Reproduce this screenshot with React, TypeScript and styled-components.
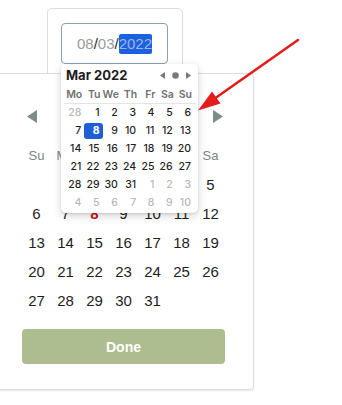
import styled, { createGlobalStyle } from 'styled-components';

const GlobalStyle = createGlobalStyle`
  html, body {
    margin: 0;
    padding: 0;
    background: #ffffff;
  }
  body {
    font-family: "Liberation Sans", Arial, sans-serif;
  }
  * {
    box-sizing: border-box;
  }
`;

type DayCell = {
  day: number;
  muted?: boolean;
  selected?: boolean;
};

const popupRows: DayCell[][] = [
  [{ day: 28, muted: true }, { day: 1 }, { day: 2 }, { day: 3 }, { day: 4 }, { day: 5 }, { day: 6 }],
  [{ day: 7 }, { day: 8, selected: true }, { day: 9 }, { day: 10 }, { day: 11 }, { day: 12 }, { day: 13 }],
  [{ day: 14 }, { day: 15 }, { day: 16 }, { day: 17 }, { day: 18 }, { day: 19 }, { day: 20 }],
  [{ day: 21 }, { day: 22 }, { day: 23 }, { day: 24 }, { day: 25 }, { day: 26 }, { day: 27 }],
  [
    { day: 28 },
    { day: 29 },
    { day: 30 },
    { day: 31 },
    { day: 1, muted: true },
    { day: 2, muted: true },
    { day: 3, muted: true },
  ],
  [4, 5, 6, 7, 8, 9, 10].map((d) => ({ day: d, muted: true })),
];

const monthRows: (number | null)[][] = [
  [null, null, 1, 2, 3, 4, 5],
  [6, 7, 8, 9, 10, 11, 12],
  [13, 14, 15, 16, 17, 18, 19],
  [20, 21, 22, 23, 24, 25, 26],
  [27, 28, 29, 30, 31, null, null],
];

const popupWeekdays = ['Mo', 'Tu', 'We', 'Th', 'Fr', 'Sa', 'Su'];
const weekdays = ['Su', 'Mo', 'Tu', 'We', 'Th', 'Fr', 'Sa'];

export default function App() {
  return (
    <Stage>
      <GlobalStyle />
      <TopCard>
        <InputWrap>
          <DateInput>
            <Segment>08</Segment>
            <Slash>/</Slash>
            <Segment>03</Segment>
            <Slash>/</Slash>
            <Segment selected>2022</Segment>
          </DateInput>
          <Popup>
            <PopupHeader>
              <PopupTitle>Mar 2022</PopupTitle>
              <PopupNav>
                <svg width="5" height="7" viewBox="0 0 5 7">
                  <path d="M5 0 L0 3.5 L5 7 Z" fill="#7a7a7a" />
                </svg>
                <svg width="7" height="7" viewBox="0 0 7 7">
                  <circle cx="3.5" cy="3.5" r="3.3" fill="#7a7a7a" />
                </svg>
                <svg width="5" height="7" viewBox="0 0 5 7">
                  <path d="M0 0 L5 3.5 L0 7 Z" fill="#7a7a7a" />
                </svg>
              </PopupNav>
            </PopupHeader>
            <PopupWeekRow>
              {popupWeekdays.map((w) => (
                <PopupWeekday key={w}>{w}</PopupWeekday>
              ))}
            </PopupWeekRow>
            <PopupGrid>
              {popupRows.flat().map((c, i) => (
                <PopupDay key={i} muted={c.muted} selected={c.selected}>
                  {c.day}
                </PopupDay>
              ))}
            </PopupGrid>
          </Popup>
        </InputWrap>
      </TopCard>

      <CalendarPanel>
        <NavRow>
          <NavArrow viewBox="0 0 10 13">
            <path d="M10 0 L0 6.5 L10 13 Z" />
          </NavArrow>
          <MonthTitle>March 2022</MonthTitle>
          <NavArrow viewBox="0 0 10 13">
            <path d="M0 0 L10 6.5 L0 13 Z" />
          </NavArrow>
        </NavRow>
        <MonthGrid>
          {weekdays.map((w) => (
            <WeekdayCell key={w}>{w}</WeekdayCell>
          ))}
          {monthRows.flat().map((d, i) => (
            <DateCell key={i} today={d === 8}>
              {d ?? ''}
            </DateCell>
          ))}
        </MonthGrid>
        <DoneButton>Done</DoneButton>
      </CalendarPanel>

      <Pointer width="342" height="405" viewBox="0 0 342 405">
        <line x1="298" y1="40" x2="214" y2="99" stroke="#e41c1c" strokeWidth="2.6" strokeLinecap="round" />
        <polygon points="198,110.5 220.5,103.5 212,91.5" fill="#e41c1c" />
      </Pointer>
    </Stage>
  );
}

const Stage = styled.div`
  position: relative;
  width: 342px;
  height: 405px;
  overflow: hidden;
  padding-top: 8px;
`;

const TopCard = styled.div`
  margin-left: 47px;
  width: 136px;
  height: 80px;
  padding: 14px 0 0 13px;
  border: 1px solid #dcdcdc;
  border-radius: 5px;
  background: #ffffff;
`;

const InputWrap = styled.div`
  position: relative;
  width: 107px;
`;

const DateInput = styled.div`
  display: flex;
  align-items: center;
  justify-content: center;
  height: 41px;
  border: 1px solid #8d9fb1;
  border-radius: 4px;
  font-size: 15px;
`;

const Segment = styled.span<{ selected?: boolean }>`
  color: ${(p) => (p.selected ? '#a4b3d6' : '#9c9c9c')};
  background: ${(p) => (p.selected ? '#1b61e4' : 'transparent')};
  border-radius: 2px;
  line-height: 20px;
`;

const Slash = styled.span`
  color: #2b2b2b;
`;

const Popup = styled.div`
  position: absolute;
  top: 100%;
  left: 0;
  z-index: 10;
  width: 137px;
  padding: 2px 4px 1px 5px;
  background: #ffffff;
  border-radius: 5px;
  box-shadow: 0 1px 2px rgba(0, 0, 0, 0.12), 0 3px 10px rgba(0, 0, 0, 0.16);
  font-family: Inter, "Liberation Sans", sans-serif;
`;

const PopupHeader = styled.div`
  display: flex;
  align-items: center;
  justify-content: space-between;
  height: 18px;
  padding-right: 3px;
`;

const PopupTitle = styled.span`
  font-size: 13px;
  font-weight: 700;
  color: #1c1c1c;
`;

const PopupNav = styled.div`
  display: flex;
  align-items: center;
  gap: 7px;
`;

const PopupWeekRow = styled.div`
  display: grid;
  grid-template-columns: repeat(7, 1fr);
  height: 17px;
  margin: 3px -2px 0 -2px;
  padding: 0 2px;
  border-bottom: 1px solid #e4e4e4;
`;

const PopupWeekday = styled.span`
  padding-right: 2px;
  text-align: right;
  font-size: 10.5px;
  font-weight: 600;
  line-height: 16px;
  color: #707070;
`;

const PopupGrid = styled.div`
  display: grid;
  grid-template-columns: repeat(7, 1fr);
`;

const PopupDay = styled.span<{ muted?: boolean; selected?: boolean }>`
  height: 16px;
  margin: 1px 0;
  padding-right: 3px;
  text-align: right;
  font-size: 10.5px;
  font-weight: ${(p) => (p.selected ? 700 : 500)};
  line-height: 16px;
  border-radius: 3px;
  color: ${(p) => (p.selected ? '#ffffff' : p.muted ? '#b9b9b9' : '#1f1f1f')};
  background: ${(p) => (p.selected ? '#1e5fd8' : 'transparent')};
`;

const CalendarPanel = styled.div`
  position: relative;
  z-index: 1;
  width: 261px;
  height: 317px;
  margin: -15px 0 0 -7px;
  padding: 32px 28px 0 28px;
  background: #ffffff;
  border: 1px solid #dedede;
  border-radius: 4px;
  box-shadow: 0 1px 2px rgba(0, 0, 0, 0.1);
`;

const NavRow = styled.div`
  display: flex;
  align-items: center;
  justify-content: space-between;
  height: 20px;
  padding: 0 2px 0 5px;
  margin-bottom: 15px;
`;

const NavArrow = styled.svg`
  width: 10px;
  height: 13px;
  fill: #7e8b8b;
`;

const MonthTitle = styled.span`
  font-size: 15px;
  font-weight: 700;
  color: #222222;
`;

const MonthGrid = styled.div`
  display: grid;
  grid-template-columns: repeat(7, 1fr);
  grid-auto-rows: 29px;
  align-items: center;
  text-align: center;
`;

const WeekdayCell = styled.span`
  font-size: 13px;
  color: #7b8484;
`;

const DateCell = styled.span<{ today?: boolean }>`
  font-size: 15px;
  font-weight: ${(p) => (p.today ? 700 : 400)};
  color: ${(p) => (p.today ? '#c4121f' : '#1e1e1e')};
`;

const DoneButton = styled.button`
  display: block;
  width: 100%;
  height: 35px;
  margin-top: 14px;
  border: none;
  border-radius: 4px;
  background: #adbd8f;
  color: #ffffff;
  font-family: "Liberation Sans", Arial, sans-serif;
  font-size: 14px;
  font-weight: 700;
`;

const Pointer = styled.svg`
  position: absolute;
  top: 0;
  left: 0;
  z-index: 20;
  pointer-events: none;
`;
